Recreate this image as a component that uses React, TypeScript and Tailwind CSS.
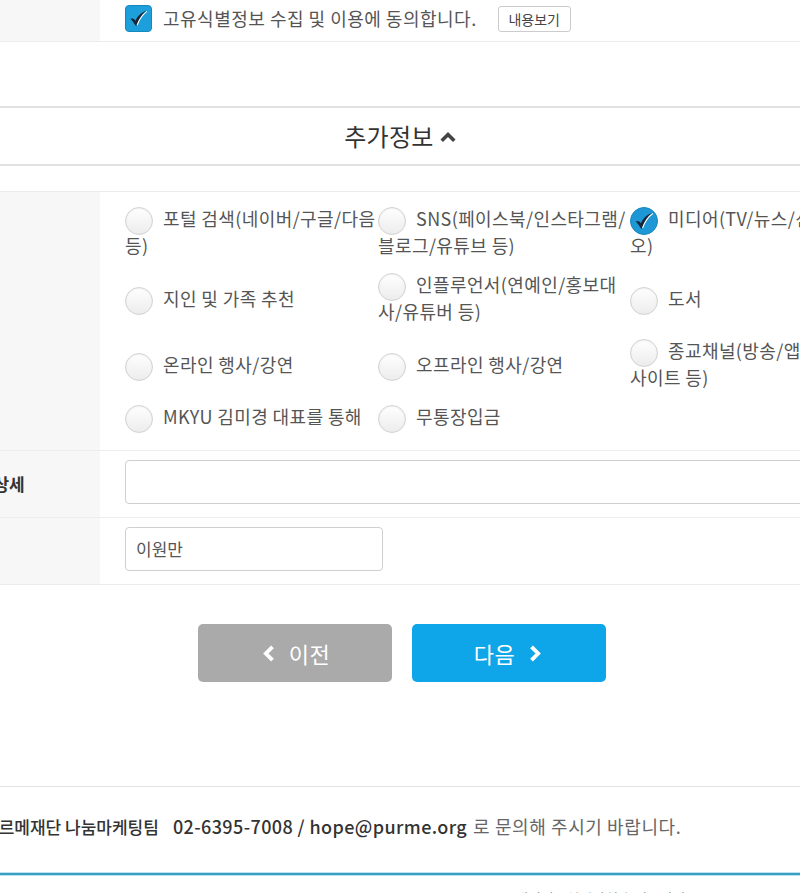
import React from 'react'

const CheckTick = () => (
  <svg viewBox="0 0 28 28" className="absolute inset-0 w-full h-full">
    <path d="M5 14.5 C7 13.5 9 13.8 10.5 16.5 C13 11 17 7 23 5 C18.5 9 14.5 14 11.5 22.5 C10 21.5 8.5 17.5 5 14.5 Z" fill="#1c2533" />
    <path d="M12.5 21.5 C15 14.5 18.5 9.5 23.5 6" stroke="#ffffff" strokeWidth="1.2" fill="none" />
  </svg>
)

const Checkbox = () => (
  <span className="relative inline-block w-[27px] h-[27px] rounded-[4px] bg-[#1d9fdc] border border-[#1788be] shrink-0">
    <CheckTick />
  </span>
)

const Radio = ({ checked }: { checked?: boolean }) =>
  checked ? (
    <span className="relative inline-block align-middle w-[28px] h-[28px] -my-[4px] mr-[10px] rounded-full bg-[#1e97d6] border border-[#1a86bf]">
      <CheckTick />
    </span>
  ) : (
    <span className="inline-block align-middle w-[28px] h-[28px] -my-[4px] mr-[10px] rounded-full border border-[#d2d2d2] bg-gradient-to-b from-white to-[#ececec] shadow-[inset_0_1px_2px_rgba(0,0,0,0.06)]" />
  )

const Option = ({ lines, checked }: { lines: string[]; checked?: boolean }) => (
  <div className="text-[18px] tracking-[0.4px] leading-[27px] text-[#555] whitespace-nowrap">
    <Radio checked={checked} />
    {lines[0]}
    {lines[1] && (
      <>
        <br />
        {lines[1]}
      </>
    )}
  </div>
)

const options: { lines: string[]; checked?: boolean }[] = [
  { lines: ['포털 검색(네이버/구글/다음', '등)'] },
  { lines: ['SNS(페이스북/인스타그램/', '블로그/유튜브 등)'] },
  { lines: ['미디어(TV/뉴스/신문/라디', '오)'], checked: true },
  { lines: ['지인 및 가족 추천'] },
  { lines: ['인플루언서(연예인/홍보대', '사/유튜버 등)'] },
  { lines: ['도서'] },
  { lines: ['온라인 행사/강연'] },
  { lines: ['오프라인 행사/강연'] },
  { lines: ['종교채널(방송/앱/웹', '사이트 등)'] },
  { lines: ['MKYU 김미경 대표를 통해'] },
  { lines: ['무통장입금'] },
]

const Chevron = ({ dir, size = 15 }: { dir: 'up' | 'left' | 'right'; size?: number }) => {
  const d = dir === 'up' ? 'M3 10.5 L8 5.5 L13 10.5' : dir === 'left' ? 'M10.5 3 L5.5 8 L10.5 13' : 'M5.5 3 L10.5 8 L5.5 13'
  return (
    <svg viewBox="0 0 16 16" width={size} height={size}>
      <path d={d} stroke="currentColor" strokeWidth="3.6" fill="none" strokeLinecap="square" strokeLinejoin="miter" />
    </svg>
  )
}

const App = () => {
  return (
    <div className="w-[800px] h-[893px] overflow-hidden bg-white font-['Noto_Sans_CJK_KR','Noto_Sans',sans-serif]">
      <div className="ml-[-100px] w-[1004px]">
        {/* agreement row */}
        <div className="flex h-[42px] border-b border-[#ececec]">
          <div className="w-[200px] bg-[#f7f7f7]" />
          <div className="flex items-start pt-[5px] pl-[25px]">
            <Checkbox />
            <span className="ml-[11px] text-[18px] tracking-[0.5px] leading-[27px] text-[#555] whitespace-nowrap">
              고유식별정보 수집 및 이용에 동의합니다.
            </span>
            <button className="ml-[21px] mt-[1px] h-[26px] w-[73px] border border-[#cccccc] rounded-[3px] bg-white text-[14px] text-[#444] leading-[24px] whitespace-nowrap">
              내용보기
            </button>
          </div>
        </div>

        {/* section header */}
        <div className="mt-[64px] border-y-2 border-[#e2e2e2] h-[60px] flex items-center justify-center gap-[6px] text-[#333] pr-[4px]">
          <span className="text-[24px] tracking-[0.3px] leading-[30px]">추가정보</span>
          <span className="text-[#444] mt-[1px]">
            <Chevron dir="up" size={16} />
          </span>
        </div>

        {/* table */}
        <div className="mt-[25px] border-t border-[#ececec]">
          <div className="flex border-b border-[#ececec]">
            <div className="w-[200px] bg-[#f7f7f7]" />
            <div className="pl-[25px] pt-[13px] pb-[20px]">
              <div className="grid grid-cols-[253px_252px_252px] gap-y-[12px] items-center">
                {options.map((o, i) => (
                  <Option key={i} lines={o.lines} checked={o.checked} />
                ))}
              </div>
            </div>
          </div>

          <div className="flex border-b border-[#ececec]">
            <div className="w-[200px] bg-[#f7f7f7] flex items-center pl-[27px] text-[17px] font-bold text-[#333] whitespace-nowrap">
              유입경로 상세
            </div>
            <div className="flex-1 pl-[25px] pr-[24px] pt-[9px] pb-[13px]">
              <div className="h-[44px] border border-[#cfcfcf] rounded-[4px] bg-white" />
            </div>
          </div>

          <div className="flex border-b border-[#ececec]">
            <div className="w-[200px] bg-[#f7f7f7]" />
            <div className="pl-[25px] pt-[9px] pb-[13px]">
              <div className="w-[258px] h-[44px] border border-[#cfcfcf] rounded-[4px] bg-white flex items-center pl-[10px] text-[17px] text-[#555]">
                이원만
              </div>
            </div>
          </div>
        </div>

        {/* buttons */}
        <div className="mt-[39px] flex justify-center gap-[20px]">
          <button className="w-[194px] h-[58px] rounded-[5px] bg-[#aaaaaa] text-white flex items-center justify-center gap-[12px]">
            <Chevron dir="left" size={17} />
            <span className="text-[22px] tracking-[0.5px]">이전</span>
          </button>
          <button className="w-[194px] h-[58px] rounded-[5px] bg-[#0ea5e9] text-white flex items-center justify-center gap-[12px]">
            <span className="text-[22px] tracking-[0.5px]">다음</span>
            <Chevron dir="right" size={17} />
          </button>
        </div>

        {/* footer notice */}
        <div className="mt-[104px] border-t border-[#e3e3e3] pt-[26px] pb-[31px] pl-[83px] leading-[27px] whitespace-nowrap">
          <span className="text-[17px] font-medium text-[#333]">푸르메재단 나눔마케팅팀</span>
          <span className="ml-[14px] text-[18px] tracking-[0.4px] font-medium text-[#333]">02-6395-7008 / hope@purme.org</span>
          <span className="ml-[6px] text-[18px] tracking-[0.6px] text-[#666]">로 문의해 주시기 바랍니다.</span>
        </div>
        <div className="h-px bg-[#b9e4f0]" />
        <div className="h-[2px] bg-[#3a9fc3]" />
        <div className="h-px bg-[#b9e4f0]" />
        <div className="pt-[12px] pl-[615px] text-[14px] text-[#777] whitespace-nowrap">개인정보처리방침 &nbsp;|&nbsp; 이용약관</div>
      </div>
    </div>
  )
}

export default App
